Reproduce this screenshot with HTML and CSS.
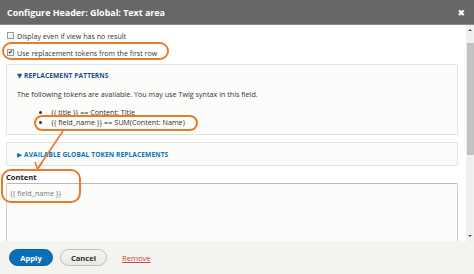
FILE: index.html
```html
<!DOCTYPE html>
<html>
<head>
<meta charset="utf-8">
<link rel="stylesheet" href="styles.css">
</head>
<body>
<div class="dialog">
  <div class="titlebar">
    <span class="title">Configure Header: Global: Text area</span>
    <span class="close">&#x2716;</span>
  </div>
  <div class="body">
    <div class="content">
      <label class="check"><span class="box"></span>Display even if view has no result</label>
      <label class="check"><span class="box checked">&#x2714;</span>Use replacement tokens from the first row</label>
      <div class="fieldset open">
        <div class="legend">&#x25BC; REPLACEMENT PATTERNS</div>
        <p class="desc">The following tokens are available. You may use Twig syntax in this field.</p>
        <ul class="tokens">
          <li>{{ title }} == Content: Title</li>
          <li>{{ field_name }} == SUM(Content: Name)</li>
        </ul>
      </div>
      <div class="fieldset closed">
        <div class="legend">&#x25B6; AVAILABLE GLOBAL TOKEN REPLACEMENTS</div>
      </div>
      <div class="label">Content</div>
      <div class="textarea">{{ field_name }}</div>
    </div>
    <div class="scrollbar">
      <span class="arrow up"></span>
      <span class="thumb"></span>
      <span class="arrow down"></span>
    </div>
  </div>
  <div class="footer">
    <button class="btn primary">Apply</button>
    <button class="btn">Cancel</button>
    <a class="remove" href="#">Remove</a>
  </div>
  <div class="oval o1"></div>
  <div class="oval o2"></div>
  <div class="oval o3"></div>
  <svg class="arrowline" width="474" height="274" viewBox="0 0 474 274">
    <path d="M63 131 L38 168" stroke="#e97a2c" stroke-width="1.6" fill="none"/>
    <path d="M35 162 L37.5 169 L42 163" stroke="#e97a2c" stroke-width="1.6" fill="none"/>
  </svg>
</div>
</body>
</html>
```
FILE: styles.css
```css
* { box-sizing: border-box; }
html, body { margin: 0; padding: 0; }
body {
  width: 474px; height: 274px; overflow: hidden;
  font-family: "Open Sans", "DejaVu Sans", sans-serif;
  color: #333;
  background: #fff;
}
.dialog { position: relative; width: 474px; height: 274px; display: flex; flex-direction: column; }
.titlebar {
  height: 25px; background: #676767; color: #fff;
  display: flex; align-items: center; justify-content: space-between;
  padding: 0 9px 0 7px;
  border-bottom: 1px solid #8a8a8a;
}
.title { font-weight: bold; font-size: 9px; letter-spacing: -0.05px; }
.close { font-size: 9px; font-weight: bold; }
.body { flex: 1; display: flex; min-height: 0; overflow: hidden; }
.content { flex: 1; padding: 2px 8px 0 6px; overflow: hidden; }
.scrollbar {
  width: 8px; background: #f0f0f0; position: relative;
  display: flex; flex-direction: column; align-items: center;
}
.thumb { display: block; width: 7px; height: 112px; background: #c2c2c2; margin-top: 12px; }
.arrow { display: block; width: 0; height: 0; border-left: 2px solid transparent; border-right: 2px solid transparent; }
.arrow.up { border-bottom: 2px solid #555; margin-top: 4px; }
.arrow.down { border-top: 2px solid #555; margin-top: auto; margin-bottom: 4px; }

.check { display: flex; align-items: center; font-size: 7.1px; height: 17px; color: #333; }
.box {
  width: 7px; height: 7px; border: 1px solid #999; background: #f4f4f4;
  margin: 0 3px 0 1px; font-size: 6px; line-height: 5px; text-align: center; color: #222;
}
.fieldset {
  border: 1px solid #e2e2de; background: #fcfcfa; border-radius: 2px;
  margin-top: 3px;
}
.fieldset.open { height: 71px; padding: 6px 10px; }
.fieldset.closed { height: 24px; padding: 7px 10px; margin-top: 7px; }
.legend { font-size: 6.6px; font-weight: bold; color: #1c4f82; letter-spacing: 0.1px; }
.closed .legend { color: #0d73b5; }
.desc { font-size: 7.2px; margin: 9px 0 0 0; }
.tokens { margin: 8px 0 0 0; padding-left: 34px; font-size: 7.2px; line-height: 10px; }
.label { font-weight: bold; font-size: 7.6px; margin-top: 6px; color: #222; }
.textarea {
  border: 1px solid #cfcfcb; border-top-color: #b8b8b4; background: #fcfcfa;
  height: 70px; margin-top: 1px; padding: 4px 3px; font-size: 7.2px; color: #777;
  border-radius: 2px;
}
.footer {
  height: 33px; background: #f3f3f0; display: flex; align-items: center;
  padding: 0 9px; gap: 7px; flex-shrink: 0;
}
.btn {
  font-family: inherit; font-weight: bold; font-size: 7.6px; height: 17px;
  border-radius: 9px; border: 1px solid #c0c0bb; color: #333;
  background: linear-gradient(#f6f6f3, #e8e8e4); padding: 0 0; width: 47px;
}
.btn.primary { background: #0a6fb7; border-color: #0a5f9e; color: #fff; width: 44px; }
.remove { color: #c9493f; font-size: 7.6px; margin-left: 8px; text-decoration: underline; }

.oval { position: absolute; border: 2px solid #e97a2c; border-radius: 12px; }
.o1 { left: 2px; top: 42px; width: 167px; height: 18px; border-radius: 10px; }
.o2 { left: 34px; top: 115px; width: 164px; height: 16px; border-radius: 9px; }
.o3 { left: 1px; top: 169px; width: 80px; height: 34px; border-radius: 10px; }
.arrowline { position: absolute; left: 0; top: 0; pointer-events: none; }
```
